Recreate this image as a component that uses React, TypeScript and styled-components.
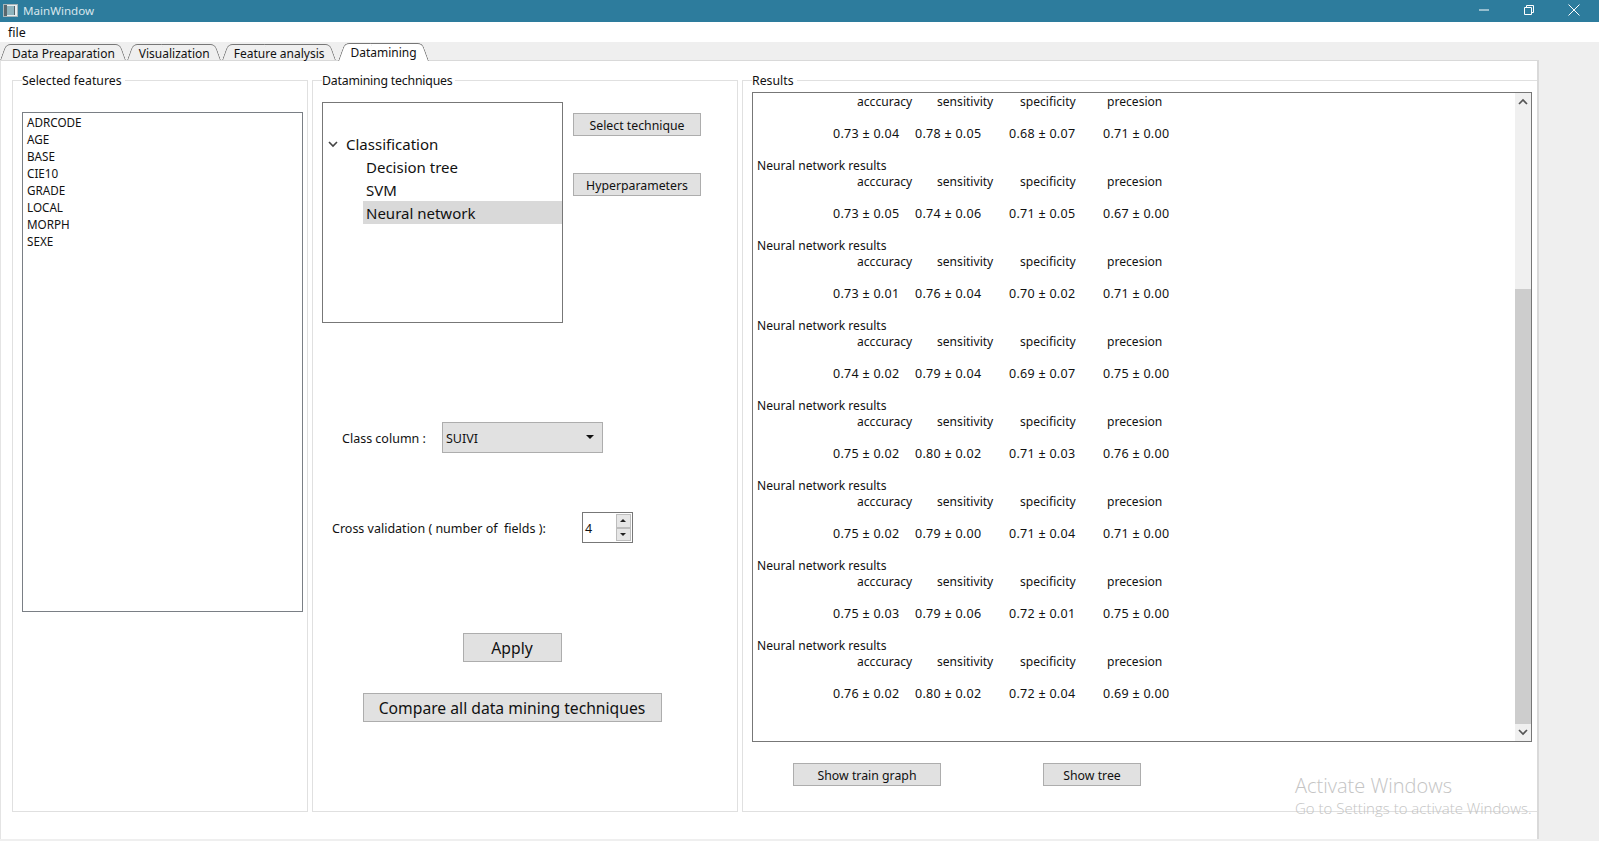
import { createGlobalStyle, styled } from "styled-components";

const features = ["ADRCODE", "AGE", "BASE", "CIE10", "GRADE", "LOCAL", "MORPH", "SEXE"];
const tabs = ["Data Preaparation", "Visualization", "Feature analysis", "Datamining"];

const results = [
  ["0.73 ± 0.04", "0.78 ± 0.05", "0.68 ± 0.07", "0.71 ± 0.00"],
  ["0.73 ± 0.05", "0.74 ± 0.06", "0.71 ± 0.05", "0.67 ± 0.00"],
  ["0.73 ± 0.01", "0.76 ± 0.04", "0.70 ± 0.02", "0.71 ± 0.00"],
  ["0.74 ± 0.02", "0.79 ± 0.04", "0.69 ± 0.07", "0.75 ± 0.00"],
  ["0.75 ± 0.02", "0.80 ± 0.02", "0.71 ± 0.03", "0.76 ± 0.00"],
  ["0.75 ± 0.02", "0.79 ± 0.00", "0.71 ± 0.04", "0.71 ± 0.00"],
  ["0.75 ± 0.03", "0.79 ± 0.06", "0.72 ± 0.01", "0.75 ± 0.00"],
  ["0.76 ± 0.02", "0.80 ± 0.02", "0.72 ± 0.04", "0.69 ± 0.00"],
];

export default function App() {
  return <Window>
    <GlobalStyle />
    <TitleBar>
      <AppIcon width="15" height="13" viewBox="0 0 15 13">
        <rect x="0.5" y="0.5" width="14" height="12" fill="#e8eef0" stroke="#a9b6ba" />
        <rect x="1" y="1" width="3" height="11" fill="#58676e" />
        <rect x="4" y="2" width="7" height="9" fill="#8fb4be" />
        <rect x="11" y="2" width="1" height="9" fill="#55656c" />
      </AppIcon>
      <TitleText>MainWindow</TitleText>
      <WindowButtons>
        <svg width="14" height="14" viewBox="0 0 14 14"><path d="M2 7h10" stroke="#fff" /></svg>
        <svg width="14" height="14" viewBox="0 0 14 14" fill="none" stroke="#fff"><path d="M2.5 4.5h7v7h-7zM4.5 4.5v-2h7v7h-2" /></svg>
        <svg width="14" height="14" viewBox="0 0 14 14" fill="none" stroke="#fff"><path d="M1.5 1.5l11 11M12.5 1.5l-11 11" /></svg>
      </WindowButtons>
    </TitleBar>
    <MenuBar><MenuItem>file</MenuItem></MenuBar>
    <TabStrip>
      {tabs.map(tab => <Tab key={tab} $active={tab === "Datamining"}>{tab}</Tab>)}
    </TabStrip>
    <Pane>
      <FeaturesGroup>
        <GroupTitle>Selected features</GroupTitle>
        <FeatureList>
          {features.map(f => <FeatureItem key={f}>{f}</FeatureItem>)}
        </FeatureList>
      </FeaturesGroup>

      <TechniquesGroup>
        <GroupTitle $spacing={-0.2}>Datamining techniques</GroupTitle>
        <TreeRow>
          <Tree>
            <TreeRoot>
              <svg width="10" height="7" viewBox="0 0 10 7" fill="none" stroke="#444" strokeWidth="1.6"><path d="M1 1l4 4 4-4" /></svg>
              Classification
            </TreeRoot>
            <TreeLeaf>Decision tree</TreeLeaf>
            <TreeLeaf>SVM</TreeLeaf>
            <TreeLeaf $selected>Neural network</TreeLeaf>
          </Tree>
          <SideButtons>
            <SmallButton>Select technique</SmallButton>
            <SmallButton>Hyperparameters</SmallButton>
          </SideButtons>
        </TreeRow>
        <ClassRow>
          <FieldLabel>Class column :</FieldLabel>
          <Combo>
            SUIVI
            <ComboArrow />
          </Combo>
        </ClassRow>
        <CrossRow>
          <FieldLabel>Cross validation ( number of&nbsp; fields ):</FieldLabel>
          <Spin>
            4
            <SpinButtons>
              <SpinButton><UpArrow /></SpinButton>
              <SpinButton><DownArrow /></SpinButton>
            </SpinButtons>
          </Spin>
        </CrossRow>
        <ActionButton $width={99} $top={90}>Apply</ActionButton>
        <ActionButton $width={299} $top={31}>Compare all data mining techniques</ActionButton>
      </TechniquesGroup>

      <ResultsGroup>
        <GroupTitle>Results</GroupTitle>
        <ResultsBox>
          <ResultsText>
            {results.map((row, i) => <ResultBlock key={i}>
              <ResultTitle>{i > 0 ? "Neural network results" : "\u00a0"}</ResultTitle>
              <HeaderRow>
                <HeaderCell $width={80}>acccuracy</HeaderCell>
                <HeaderCell $width={83}>sensitivity</HeaderCell>
                <HeaderCell $width={87}>specificity</HeaderCell>
                <HeaderCell $width={60}>precesion</HeaderCell>
              </HeaderRow>
              <BlankLine />
              <ValueRow>
                <ValueCell $width={82}>{row[0]}</ValueCell>
                <ValueCell $width={94}>{row[1]}</ValueCell>
                <ValueCell $width={94}>{row[2]}</ValueCell>
                <ValueCell $width={70}>{row[3]}</ValueCell>
              </ValueRow>
              <BlankLine />
            </ResultBlock>)}
          </ResultsText>
          <Scrollbar>
            <ScrollStep>
              <svg width="10" height="7" viewBox="0 0 10 7" fill="none" stroke="#555" strokeWidth="1.7"><path d="M1 6l4-4 4 4" /></svg>
            </ScrollStep>
            <ScrollTrack>
              <ScrollThumb />
            </ScrollTrack>
            <ScrollStep>
              <svg width="10" height="7" viewBox="0 0 10 7" fill="none" stroke="#555" strokeWidth="1.7"><path d="M1 1l4 4 4-4" /></svg>
            </ScrollStep>
          </Scrollbar>
        </ResultsBox>
        <ResultsActions>
          <SmallButton $width={148}>Show train graph</SmallButton>
          <SmallButton $width={98}>Show tree</SmallButton>
        </ResultsActions>
        <Watermark>
          <WatermarkTitle>Activate Windows</WatermarkTitle>
          <WatermarkText>Go to Settings to activate Windows.</WatermarkText>
        </Watermark>
      </ResultsGroup>
    </Pane>
  </Window>;
}

const GlobalStyle = createGlobalStyle`
  html, body {
    margin: 0;
    padding: 0;
    background: #efefef;
  }
  body {
    font-family: "Noto Sans", Tahoma, sans-serif;
    font-size: 12.5px;
    color: #111;
  }
`;

const Window = styled.div`
  width: 1599px;
  height: 841px;
  overflow: hidden;
  display: flex;
  flex-direction: column;
  background: #efefef;
`;

const TitleBar = styled.div`
  height: 22px;
  flex: none;
  box-sizing: border-box;
  display: flex;
  align-items: center;
  padding: 0 0 2px 3px;
  background: #2d7c9d;
`;

const AppIcon = styled.svg`
  flex: none;
`;

const TitleText = styled.span`
  margin-left: 5px;
  color: #d8e6ec;
  font-size: 11.6px;
`;

const WindowButtons = styled.div`
  margin-left: auto;
  padding-right: 18px;
  display: flex;
  gap: 31px;
`;

const MenuBar = styled.div`
  height: 20px;
  flex: none;
  display: flex;
  align-items: center;
  padding-left: 8px;
  background: #fff;
`;

const MenuItem = styled.span`
  font-size: 12.5px;
`;

const TabStrip = styled.div`
  height: 18px;
  flex: none;
  display: flex;
  align-items: flex-end;
  padding-left: 3px;
  gap: 6px;
`;

const Tab = styled.div<{ $active?: boolean }>`
  position: relative;
  z-index: ${p => (p.$active ? 2 : 1)};
  height: ${p => (p.$active ? 18 : 16)}px;
  line-height: 20px;
  padding: 0 9px;
  white-space: nowrap;
  font-size: 12px;
  margin-bottom: ${p => (p.$active ? -1 : 0)}px;
  margin-left: ${p => (p.$active ? 2 : 0)}px;

  &::before,
  &::after {
    content: "";
    position: absolute;
    z-index: -1;
    top: 0;
    bottom: 0;
    width: 60%;
    border-top: 1px solid #777;
    background: ${p => (p.$active ? "#fff" : "#efefef")};
    transform-origin: bottom;
  }

  &::before {
    left: -3px;
    border-left: 1px solid #777;
    border-top-left-radius: 5px;
    transform: skewX(-20deg);
  }

  &::after {
    right: -3px;
    border-right: 1px solid #777;
    border-top-right-radius: 5px;
    transform: skewX(20deg);
  }
`;

const Pane = styled.div`
  width: 1539px;
  height: 779px;
  flex: none;
  box-sizing: border-box;
  display: flex;
  align-items: flex-start;
  padding: 19px 0 0 11px;
  background: #fff;
  border-top: 1px solid #d9d9d9;
  border-right: 2px solid #d9d9d9;
  border-left: 1px solid #e4e4e4;
`;

const Group = styled.div`
  position: relative;
  box-sizing: border-box;
  height: 732px;
  flex: none;
  border: 1px solid #e0e0e0;
`;

const FeaturesGroup = styled(Group)`
  width: 296px;
  padding: 31px 3px 0 9px;
`;

const TechniquesGroup = styled(Group)`
  width: 426px;
  margin-left: 4px;
  padding: 21px 0 0 9px;
  display: flex;
  flex-direction: column;
`;

const ResultsGroup = styled(Group)`
  width: 795px;
  margin-left: 4px;
  padding: 11px 5px 0 9px;
  border-right: none;
`;

const GroupTitle = styled.span<{ $spacing?: number }>`
  position: absolute;
  top: -8px;
  left: 9px;
  padding-right: 3px;
  background: #fff;
  font-size: 12.3px;
  letter-spacing: ${p => p.$spacing ?? 0}px;
  line-height: 16px;
`;

const FeatureList = styled.div`
  box-sizing: border-box;
  width: 281px;
  height: 500px;
  padding: 1px 4px;
  border: 1px solid #7a7f85;
`;

const FeatureItem = styled.div`
  height: 17px;
  line-height: 17px;
  font-size: 11.7px;
`;

const TreeRow = styled.div`
  display: flex;
  align-items: flex-start;
`;

const Tree = styled.div`
  box-sizing: border-box;
  width: 241px;
  height: 221px;
  padding-top: 29px;
  border: 1px solid #777;
  font-size: 15px;
`;

const TreeRoot = styled.div`
  box-sizing: border-box;
  height: 23px;
  line-height: 23px;
  display: flex;
  align-items: center;
  gap: 8px;
  padding: 2px 0 0 5px;
`;

const TreeLeaf = styled.div<{ $selected?: boolean }>`
  height: 23px;
  line-height: 25px;
  margin-left: 40px;
  padding-left: 3px;
  background: ${p => (p.$selected ? "#d9d9d9" : "transparent")};
`;

const SideButtons = styled.div`
  display: flex;
  flex-direction: column;
  gap: 37px;
  margin: 11px 0 0 10px;
`;

const SmallButton = styled.div<{ $width?: number }>`
  box-sizing: border-box;
  width: ${p => p.$width ?? 128}px;
  height: 23px;
  line-height: 23px;
  text-align: center;
  font-size: 12.3px;
  background: #e1e1e1;
  border: 1px solid #adadad;
`;

const ClassRow = styled.div`
  display: flex;
  align-items: center;
  margin: 99px 0 0 20px;
`;

const FieldLabel = styled.span`
  padding-top: 2px;
  white-space: nowrap;
`;

const Combo = styled.div`
  position: relative;
  box-sizing: border-box;
  width: 161px;
  height: 31px;
  line-height: 31px;
  margin-left: 16px;
  padding-left: 3px;
  background: #e1e1e1;
  border: 1px solid #adadad;
`;

const ComboArrow = styled.span`
  position: absolute;
  right: 8px;
  top: 12px;
  border-left: 4px solid transparent;
  border-right: 4px solid transparent;
  border-top: 4px solid #111;
`;

const CrossRow = styled.div`
  display: flex;
  align-items: center;
  margin: 59px 0 0 10px;
`;

const Spin = styled.div`
  box-sizing: border-box;
  width: 51px;
  height: 31px;
  margin-left: 36px;
  padding-left: 2px;
  line-height: 31px;
  display: flex;
  justify-content: space-between;
  border: 1px solid #777;
`;

const SpinButtons = styled.div`
  width: 15px;
  margin: 1px;
  display: flex;
  flex-direction: column;
`;

const SpinButton = styled.div`
  flex: 1;
  display: flex;
  align-items: center;
  justify-content: center;
  background: #e6e6e6;
  border: 1px solid #bdbdbd;
`;

const UpArrow = styled.span`
  border-left: 3px solid transparent;
  border-right: 3px solid transparent;
  border-bottom: 3px solid #222;
`;

const DownArrow = styled.span`
  border-left: 3px solid transparent;
  border-right: 3px solid transparent;
  border-top: 3px solid #222;
`;

const ActionButton = styled.div<{ $width: number; $top: number }>`
  box-sizing: border-box;
  align-self: flex-start;
  width: ${p => p.$width}px;
  height: 29px;
  line-height: 29px;
  margin: ${p => p.$top}px 0 0 ${p => 190 - p.$width / 2}px;
  text-align: center;
  font-size: 15.7px;
  background: #e1e1e1;
  border: 1px solid #adadad;
`;

const ResultsBox = styled.div`
  box-sizing: border-box;
  width: 780px;
  height: 650px;
  display: flex;
  border: 1px solid #777;
`;

const ResultsText = styled.div`
  flex: 1;
  min-width: 0;
  overflow: hidden;
  padding: 1px 0 0 4px;
`;

const ResultBlock = styled.div`
  margin-top: 0;

  &:first-child {
    margin-top: -16px;
  }
`;

const ResultTitle = styled.div`
  height: 16px;
  line-height: 16px;
  font-size: 12.1px;
`;

const HeaderRow = styled.div`
  display: flex;
  height: 16px;
  line-height: 16px;
  padding-left: 100px;
`;

const ValueRow = styled.div`
  display: flex;
  height: 16px;
  line-height: 16px;
  padding-left: 76px;
`;

const HeaderCell = styled.span<{ $width: number }>`
  flex: none;
  width: ${p => p.$width}px;
  font-size: 12.1px;
  white-space: nowrap;
`;

const ValueCell = styled.span<{ $width: number }>`
  flex: none;
  width: ${p => p.$width}px;
  letter-spacing: 0.28px;
  white-space: nowrap;
`;

const BlankLine = styled.div`
  height: 16px;
`;

const Scrollbar = styled.div`
  width: 16px;
  flex: none;
  display: flex;
  flex-direction: column;
  background: #f0f0f0;
`;

const ScrollStep = styled.div`
  height: 17px;
  flex: none;
  display: flex;
  align-items: center;
  justify-content: center;
`;

const ScrollTrack = styled.div`
  flex: 1;
  padding-top: 179px;
  display: flex;
  flex-direction: column;
`;

const ScrollThumb = styled.div`
  flex: 1;
  background: #cdcdcd;
`;

const ResultsActions = styled.div`
  display: flex;
  gap: 102px;
  margin: 21px 0 0 41px;
`;

const Watermark = styled.div`
  position: absolute;
  left: 552px;
  top: 692px;
  color: #c4c4c4;
  font-family: "Open Sans", sans-serif;
  font-weight: 300;
  white-space: nowrap;
`;

const WatermarkTitle = styled.div`
  font-size: 20px;
  line-height: 26px;
`;

const WatermarkText = styled.div`
  font-size: 15px;
  line-height: 19px;
`;
